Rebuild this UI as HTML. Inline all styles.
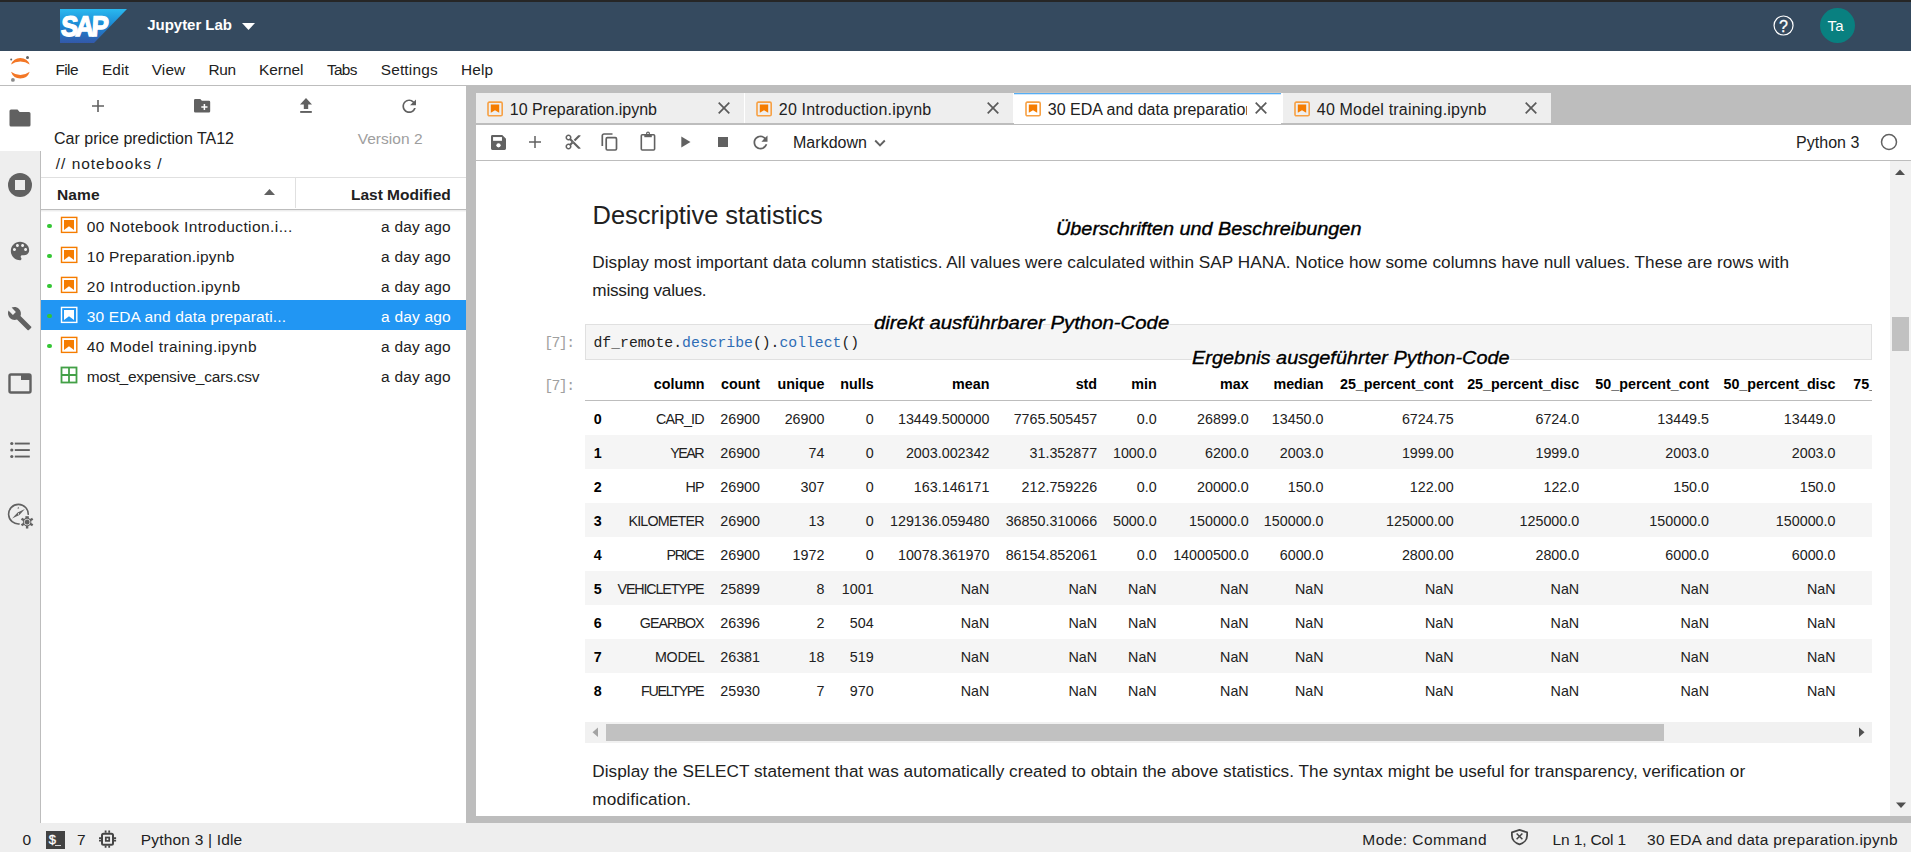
<!DOCTYPE html>
<html><head><meta charset="utf-8">
<style>
*{box-sizing:border-box;margin:0;padding:0}
html,body{width:1911px;height:852px;overflow:hidden;background:#fff;font-family:"Liberation Sans",sans-serif;color:#212121}
.abs{position:absolute}
.t{position:absolute;white-space:nowrap}
svg{position:absolute;overflow:visible}
</style></head><body>
<div class="abs" style="left:0px;top:0px;width:1911px;height:2px;background:#262626;"></div>
<div class="abs" style="left:0px;top:2px;width:1911px;height:49px;background:#354a5f;"></div>
<svg style="left:60px;top:9px" width="67" height="34" viewBox="0 0 67 34">
<defs><linearGradient id="sapg" x1="0" y1="0" x2="0" y2="1"><stop offset="0" stop-color="#2ab9ef"/><stop offset="0.5" stop-color="#1b86d2"/><stop offset="1" stop-color="#3358a9"/></linearGradient></defs>
<polygon points="0,0 67,0 34,34 0,34" fill="url(#sapg)"/>
<text x="2.4" y="27" font-family="Liberation Sans" font-weight="bold" font-size="28.5" fill="#fff" stroke="#fff" stroke-width="1.3" letter-spacing="-2.8" transform="scale(0.9,1) skewX(-4)">SAP</text>
</svg>
<div class="t" style="left:147.30px;top:17.32px;font-size:15px;line-height:16.75px;font-family:'Liberation Sans',sans-serif;color:#fff;letter-spacing:-0.042px;font-weight:bold;">Jupyter Lab</div>
<svg style="left:242px;top:23px" width="13" height="7"><polygon points="0,0 13,0 6.5,7" fill="#fff"/></svg>
<svg style="left:1771.5px;top:14.4px" width="23" height="23" viewBox="0 0 23 23"><circle cx="11.55" cy="11.5" r="9.5" fill="none" stroke="#fff" stroke-width="1.2"/><text x="11.55" y="17.8" text-anchor="middle" font-family="Liberation Sans" font-size="16" fill="#fff" stroke="#fff" stroke-width="0.3">?</text></svg>
<div class="abs" style="left:1819.9px;top:7.8px;width:35.2px;height:35.2px;border-radius:50%;background:#098080"></div>
<div class="t" style="left:1827.60px;top:17.52px;font-size:15px;line-height:16.75px;font-family:'Liberation Sans',sans-serif;color:#fff;letter-spacing:0.045px;">Ta</div>
<div class="abs" style="left:0px;top:85px;width:1911px;height:1px;background:#bdbdbd;"></div>
<svg style="left:4px;top:52px" width="32" height="34" viewBox="0 0 32 34">
<path d="M7 12.6A9.92 9.92 0 0 1 25.7 12.6A16.07 16.07 0 0 0 7 12.6Z" fill="#f37726"/>
<path d="M7 19.75A9.85 9.85 0 0 0 25.7 19.75A15.45 15.45 0 0 1 7 19.75Z" fill="#f37726"/>
<circle cx="23.5" cy="5.6" r="1.5" fill="#616161"/>
<circle cx="7.2" cy="7.6" r="1" fill="#616161"/>
<circle cx="8.9" cy="27.9" r="1.9" fill="#8a8a8a"/>
</svg>
<div class="t" style="left:55.50px;top:60.86px;font-size:15.4px;line-height:17.20px;font-family:'Liberation Sans',sans-serif;color:#212121;letter-spacing:-0.603px;">File</div>
<div class="t" style="left:102.00px;top:60.86px;font-size:15.4px;line-height:17.20px;font-family:'Liberation Sans',sans-serif;color:#212121;letter-spacing:0.055px;">Edit</div>
<div class="t" style="left:151.80px;top:60.86px;font-size:15.4px;line-height:17.20px;font-family:'Liberation Sans',sans-serif;color:#212121;letter-spacing:0.086px;">View</div>
<div class="t" style="left:208.50px;top:60.86px;font-size:15.4px;line-height:17.20px;font-family:'Liberation Sans',sans-serif;color:#212121;letter-spacing:-0.372px;">Run</div>
<div class="t" style="left:259.00px;top:60.86px;font-size:15.4px;line-height:17.20px;font-family:'Liberation Sans',sans-serif;color:#212121;letter-spacing:-0.004px;">Kernel</div>
<div class="t" style="left:327.00px;top:60.86px;font-size:15.4px;line-height:17.20px;font-family:'Liberation Sans',sans-serif;color:#212121;letter-spacing:-0.708px;">Tabs</div>
<div class="t" style="left:380.70px;top:60.86px;font-size:15.4px;line-height:17.20px;font-family:'Liberation Sans',sans-serif;color:#212121;letter-spacing:0.194px;">Settings</div>
<div class="t" style="left:461.00px;top:60.86px;font-size:15.4px;line-height:17.20px;font-family:'Liberation Sans',sans-serif;color:#212121;letter-spacing:0.174px;">Help</div>
<div class="abs" style="left:0px;top:86px;width:40px;height:737px;background:#eeeeee;"></div>
<div class="abs" style="left:40px;top:151px;width:1px;height:672px;background:#bdbdbd;"></div>
<div class="abs" style="left:0px;top:86px;width:41px;height:65px;background:#fff;"></div>
<svg style="left:9px;top:108px" width="22" height="20" viewBox="0 0 22 20"><path d="M2 1.5h6.5l2.2 2.5H20a1.5 1.5 0 0 1 1.5 1.5V17a1.5 1.5 0 0 1-1.5 1.5H2A1.5 1.5 0 0 1 .5 17V3A1.5 1.5 0 0 1 2 1.5z" fill="#616161"/></svg>
<svg style="left:8px;top:173px" width="24" height="24" viewBox="0 0 24 24"><circle cx="12" cy="12" r="12" fill="#616161"/><rect x="7" y="7" width="10" height="10" fill="#eeeeee"/></svg>
<svg style="left:10px;top:241px" width="20" height="20" viewBox="0 0 24 24"><path d="M12 1C5.9 1 1 5.9 1 12s4.9 11 11 11c1 0 1.8-.8 1.8-1.8 0-.5-.2-.9-.5-1.2-.3-.3-.5-.7-.5-1.2 0-1 .8-1.8 1.8-1.8H17c3.4 0 6-2.7 6-6C23 5.5 18.1 1 12 1zM5.3 12c-1 0-1.8-.8-1.8-1.8S4.3 8.3 5.3 8.3 7.2 9.2 7.2 10.2 6.3 12 5.3 12zm3.6-4.9c-1 0-1.8-.8-1.8-1.8S7.9 3.5 8.9 3.5s1.8.8 1.8 1.8-.8 1.8-1.8 1.8zm6.2 0c-1 0-1.8-.8-1.8-1.8s.8-1.8 1.8-1.8 1.8.8 1.8 1.8-.8 1.8-1.8 1.8zm3.6 4.9c-1 0-1.8-.8-1.8-1.8s.8-1.8 1.8-1.8 1.8.8 1.8 1.8-.8 1.8-1.8 1.8z" fill="#616161"/></svg>
<svg style="left:8px;top:305px" width="24" height="25" viewBox="0 0 24 25"><path d="M23 21.5 12.5 11c.9-2.4.4-5.2-1.5-7.1C9 1.9 6 1.5 3.6 2.6l4.3 4.3-3 3L.5 5.6C-.6 8 0 11 1.9 13c1.9 1.9 4.7 2.4 7.1 1.5L19.5 25c.4.4 1 .4 1.4 0l2.1-2.1c.5-.4.5-1.1 0-1.4z" fill="#616161"/></svg>
<svg style="left:8px;top:373px" width="24" height="21" viewBox="0 0 24 21"><rect x="1.5" y="1.5" width="21" height="18" rx="1.5" fill="none" stroke="#616161" stroke-width="2.4"/><rect x="13" y="1" width="10" height="6" fill="#616161"/></svg>
<svg style="left:10px;top:441px" width="21" height="18" viewBox="0 0 21 18"><circle cx="1.8" cy="2.5" r="1.6" fill="#616161"/><circle cx="1.8" cy="9" r="1.6" fill="#616161"/><circle cx="1.8" cy="15.5" r="1.6" fill="#616161"/><rect x="4.8" y="1.6" width="15" height="1.9" fill="#616161"/><rect x="4.8" y="8.1" width="15" height="1.9" fill="#616161"/><rect x="4.8" y="14.6" width="15" height="1.9" fill="#616161"/></svg>
<svg style="left:6px;top:501px" width="28" height="28" viewBox="0 0 28 28"><path d="M13.6 22.9A9.8 9.8 0 1 1 22.2 13.9" fill="none" stroke="#616161" stroke-width="1.6"/><polygon points="6.1,17.5 11.61,11.59 18.9,8.1 13.39,14.01" fill="#616161"/><rect x="12.1" y="12.1" width="0.9" height="1.6" fill="#eee"/><polygon points="11.4,7.5 13.2,7.5 12.3,5.7" fill="#616161"/><circle cx="21.1" cy="21.06" r="6.3" fill="#eee"/><rect x="19.4" y="15.2" width="3.4" height="2.6" transform="rotate(0 21.1 21.06)" fill="#616161"/><rect x="19.9" y="14.6" width="2.4" height="3" transform="rotate(60 21.1 21.06)" fill="#616161"/><rect x="19.9" y="14.6" width="2.4" height="3" transform="rotate(120 21.1 21.06)" fill="#616161"/><rect x="19.9" y="14.6" width="2.4" height="3" transform="rotate(180 21.1 21.06)" fill="#616161"/><rect x="19.9" y="14.6" width="2.4" height="3" transform="rotate(240 21.1 21.06)" fill="#616161"/><rect x="19.9" y="14.6" width="2.4" height="3" transform="rotate(300 21.1 21.06)" fill="#616161"/><circle cx="21.1" cy="21.06" r="4.3" fill="#616161"/><circle cx="21.1" cy="21.06" r="2.9" fill="none" stroke="#eee" stroke-width="0.8"/></svg>
<svg style="left:91px;top:99px" width="14" height="14" viewBox="0 0 14 14"><path d="M7 1v12M1 7h12" stroke="#616161" stroke-width="1.6"/></svg>
<svg style="left:194px;top:99px" width="16.2" height="13.6" viewBox="0 0 16.2 13.6"><path d="M1.3 0h5l1.6 1.8H14.9A1.3 1.3 0 0 1 16.2 3.1v9.2a1.3 1.3 0 0 1-1.3 1.3H1.3A1.3 1.3 0 0 1 0 12.3V1.3A1.3 1.3 0 0 1 1.3 0z" fill="#616161"/><path d="M10.4 4.9v6.2M7.3 8h6.2" stroke="#fff" stroke-width="1.5"/></svg>
<svg style="left:298px;top:97px" width="16" height="17" viewBox="0 0 16 17"><path d="M8 1 2 7.5h3.8V12h4.4V7.5H14z" fill="#616161"/><rect x="2.2" y="14" width="11.6" height="1.9" fill="#616161"/></svg>
<svg style="left:398.8px;top:95.7px" width="20.4" height="20.4" viewBox="0 0 24 24"><path d="M17.65 6.35A7.958 7.958 0 0 0 12 4c-4.42 0-7.99 3.58-7.99 8s3.57 8 7.99 8c3.73 0 6.84-2.55 7.73-6h-2.08A5.99 5.99 0 0 1 12 18c-3.31 0-6-2.69-6-6s2.69-6 6-6c1.66 0 3.14.69 4.22 1.78L13 11h7V4l-2.35 2.35z" fill="#616161"/></svg>
<div class="t" style="left:54.00px;top:129.52px;font-size:16px;line-height:17.87px;font-family:'Liberation Sans',sans-serif;color:#212121;letter-spacing:0.003px;">Car price prediction TA12</div>
<div class="t" style="left:357.70px;top:129.97px;font-size:15.5px;line-height:17.31px;font-family:'Liberation Sans',sans-serif;color:#9e9e9e;letter-spacing:0.023px;">Version 2</div>
<div class="t" style="left:55.80px;top:154.97px;font-size:15.5px;line-height:17.31px;font-family:'Liberation Sans',sans-serif;color:#212121;letter-spacing:0.972px;">// notebooks /</div>
<div class="abs" style="left:41px;top:177px;width:425px;height:1px;background:#e0e0e0;"></div>
<div class="abs" style="left:41px;top:209px;width:425px;height:1px;background:#bdbdbd;"></div>
<div class="abs" style="left:41px;top:210px;width:425px;height:1px;background:#ededed;"></div>
<div class="abs" style="left:41px;top:211px;width:425px;height:1px;background:#f7f7f7;"></div>
<div class="abs" style="left:295px;top:178px;width:1px;height:30px;background:#e0e0e0;"></div>
<div class="t" style="left:56.90px;top:185.77px;font-size:15.5px;line-height:17.31px;font-family:'Liberation Sans',sans-serif;color:#212121;letter-spacing:0.159px;font-weight:bold;">Name</div>
<svg style="left:264px;top:189px" width="11" height="6"><polygon points="0,6 11,6 5.5,0" fill="#616161"/></svg>
<div class="t" style="left:351.00px;top:185.77px;font-size:15.5px;line-height:17.31px;font-family:'Liberation Sans',sans-serif;color:#212121;letter-spacing:-0.015px;font-weight:bold;">Last Modified</div>
<div class="abs" style="left:47.1px;top:223.5px;width:4.6px;height:4.6px;border-radius:50%;background:#33c633"></div>
<svg style="left:60px;top:216px" width="18" height="18" viewBox="0 0 18 18"><rect x="1.5" y="1.4" width="15.3" height="15" fill="none" stroke="#f57c00" stroke-width="1.4"/><path d="M4 4h10v10L9 10.2 4 14z" fill="#f57c00"/></svg>
<div class="t" style="left:86.80px;top:217.77px;font-size:15.5px;line-height:17.31px;font-family:'Liberation Sans',sans-serif;color:#212121;letter-spacing:0.419px;">00 Notebook Introduction.i...</div>
<div class="t" style="left:381.10px;top:217.77px;font-size:15.5px;line-height:17.31px;font-family:'Liberation Sans',sans-serif;color:#212121;letter-spacing:0.189px;">a day ago</div>
<div class="abs" style="left:47.1px;top:253.5px;width:4.6px;height:4.6px;border-radius:50%;background:#33c633"></div>
<svg style="left:60px;top:246px" width="18" height="18" viewBox="0 0 18 18"><rect x="1.5" y="1.4" width="15.3" height="15" fill="none" stroke="#f57c00" stroke-width="1.4"/><path d="M4 4h10v10L9 10.2 4 14z" fill="#f57c00"/></svg>
<div class="t" style="left:86.80px;top:247.77px;font-size:15.5px;line-height:17.31px;font-family:'Liberation Sans',sans-serif;color:#212121;letter-spacing:0.234px;">10 Preparation.ipynb</div>
<div class="t" style="left:381.10px;top:247.77px;font-size:15.5px;line-height:17.31px;font-family:'Liberation Sans',sans-serif;color:#212121;letter-spacing:0.189px;">a day ago</div>
<div class="abs" style="left:47.1px;top:283.5px;width:4.6px;height:4.6px;border-radius:50%;background:#33c633"></div>
<svg style="left:60px;top:276px" width="18" height="18" viewBox="0 0 18 18"><rect x="1.5" y="1.4" width="15.3" height="15" fill="none" stroke="#f57c00" stroke-width="1.4"/><path d="M4 4h10v10L9 10.2 4 14z" fill="#f57c00"/></svg>
<div class="t" style="left:86.80px;top:277.77px;font-size:15.5px;line-height:17.31px;font-family:'Liberation Sans',sans-serif;color:#212121;letter-spacing:0.465px;">20 Introduction.ipynb</div>
<div class="t" style="left:381.10px;top:277.77px;font-size:15.5px;line-height:17.31px;font-family:'Liberation Sans',sans-serif;color:#212121;letter-spacing:0.189px;">a day ago</div>
<div class="abs" style="left:41px;top:300px;width:425px;height:30px;background:#2196f3;"></div>
<div class="abs" style="left:47.1px;top:313.5px;width:4.6px;height:4.6px;border-radius:50%;background:#33c633"></div>
<svg style="left:60px;top:306px" width="18" height="18" viewBox="0 0 18 18"><rect x="1.5" y="1.4" width="15.3" height="15" fill="none" stroke="#fff" stroke-width="1.4"/><path d="M4 4h10v10L9 10.2 4 14z" fill="#fff"/></svg>
<div class="t" style="left:86.80px;top:307.77px;font-size:15.5px;line-height:17.31px;font-family:'Liberation Sans',sans-serif;color:#fff;letter-spacing:0.133px;">30 EDA and data preparati...</div>
<div class="t" style="left:381.10px;top:307.77px;font-size:15.5px;line-height:17.31px;font-family:'Liberation Sans',sans-serif;color:#fff;letter-spacing:0.189px;">a day ago</div>
<div class="abs" style="left:47.1px;top:343.5px;width:4.6px;height:4.6px;border-radius:50%;background:#33c633"></div>
<svg style="left:60px;top:336px" width="18" height="18" viewBox="0 0 18 18"><rect x="1.5" y="1.4" width="15.3" height="15" fill="none" stroke="#f57c00" stroke-width="1.4"/><path d="M4 4h10v10L9 10.2 4 14z" fill="#f57c00"/></svg>
<div class="t" style="left:86.80px;top:337.77px;font-size:15.5px;line-height:17.31px;font-family:'Liberation Sans',sans-serif;color:#212121;letter-spacing:0.429px;">40 Model training.ipynb</div>
<div class="t" style="left:381.10px;top:337.77px;font-size:15.5px;line-height:17.31px;font-family:'Liberation Sans',sans-serif;color:#212121;letter-spacing:0.189px;">a day ago</div>
<svg style="left:60px;top:366px" width="18" height="18" viewBox="0 0 18 18"><rect x="1.5" y="1.5" width="15" height="15" fill="none" stroke="#43a047" stroke-width="1.8"/><path d="M9 1v16M1 9h16" stroke="#43a047" stroke-width="1.8"/></svg>
<div class="t" style="left:86.80px;top:367.77px;font-size:15.5px;line-height:17.31px;font-family:'Liberation Sans',sans-serif;color:#212121;letter-spacing:-0.212px;">most_expensive_cars.csv</div>
<div class="t" style="left:381.10px;top:367.77px;font-size:15.5px;line-height:17.31px;font-family:'Liberation Sans',sans-serif;color:#212121;letter-spacing:0.189px;">a day ago</div>
<div class="abs" style="left:466px;top:86px;width:10px;height:737px;background:#bdbdbd;"></div>
<div class="abs" style="left:476px;top:816px;width:1435px;height:7px;background:#bdbdbd;"></div>
<div class="abs" style="left:476px;top:86px;width:1435px;height:7px;background:#bdbdbd;"></div>
<div class="abs" style="left:1551px;top:86px;width:360px;height:37px;background:#bdbdbd;"></div>
<div class="abs" style="left:476px;top:123px;width:1435px;height:2px;background:#bdbdbd;"></div>
<div class="abs" style="left:1014px;top:92px;width:267px;height:1px;background:#c9c5c1;"></div>
<div class="abs" style="left:476px;top:93px;width:268px;height:30px;background:#eeeeee;overflow:hidden">
<svg style="left:11px;top:8px" width="16" height="16" viewBox="0 0 16 16"><rect x="1" y="1.1" width="14.2" height="13.6" rx="1.3" fill="none" stroke="#f7a043" stroke-width="1.6"/><path d="M3.8 3.6h8.4v8.2L8 9.2 3.8 11.8z" fill="#f57c00"/></svg>
<div class="abs" style="left:33px;top:0;width:208px;height:30px;overflow:hidden"><div class="t" style="left:0.80px;top:7.62px;font-size:16px;line-height:17.87px;font-family:'Liberation Sans',sans-serif;color:#212121;letter-spacing:-0.024px;">10 Preparation.ipynb</div>
</div>
<svg style="left:242px;top:9px" width="12" height="12" viewBox="0 0 12 12"><path d="M.7 .7l10.6 10.6M11.3 .7L.7 11.3" stroke="#5a5a5a" stroke-width="1.7"/></svg>
</div>
<div class="abs" style="left:745px;top:93px;width:268px;height:30px;background:#eeeeee;overflow:hidden">
<svg style="left:11px;top:8px" width="16" height="16" viewBox="0 0 16 16"><rect x="1" y="1.1" width="14.2" height="13.6" rx="1.3" fill="none" stroke="#f7a043" stroke-width="1.6"/><path d="M3.8 3.6h8.4v8.2L8 9.2 3.8 11.8z" fill="#f57c00"/></svg>
<div class="abs" style="left:33px;top:0;width:208px;height:30px;overflow:hidden"><div class="t" style="left:0.80px;top:7.62px;font-size:16px;line-height:17.87px;font-family:'Liberation Sans',sans-serif;color:#212121;letter-spacing:0.193px;">20 Introduction.ipynb</div>
</div>
<svg style="left:242px;top:9px" width="12" height="12" viewBox="0 0 12 12"><path d="M.7 .7l10.6 10.6M11.3 .7L.7 11.3" stroke="#5a5a5a" stroke-width="1.7"/></svg>
</div>
<div class="abs" style="left:1014px;top:93px;width:267px;height:31px;background:#fff;overflow:hidden">
<div class="abs" style="left:0px;top:0px;width:267px;height:1px;background:#55aef5;"></div>
<div class="abs" style="left:0px;top:1px;width:267px;height:1px;background:#cfe7fb;"></div>
<svg style="left:11px;top:8px" width="16" height="16" viewBox="0 0 16 16"><rect x="1" y="1.1" width="14.2" height="13.6" rx="1.3" fill="none" stroke="#f7a043" stroke-width="1.6"/><path d="M3.8 3.6h8.4v8.2L8 9.2 3.8 11.8z" fill="#f57c00"/></svg>
<div class="abs" style="left:33px;top:0;width:200px;height:30px;overflow:hidden"><div class="t" style="left:0.80px;top:7.62px;font-size:16px;line-height:17.87px;font-family:'Liberation Sans',sans-serif;color:#212121;letter-spacing:0.000px;">30 EDA and data preparation.ipynb</div>
</div>
<svg style="left:241px;top:9px" width="12" height="12" viewBox="0 0 12 12"><path d="M.7 .7l10.6 10.6M11.3 .7L.7 11.3" stroke="#5a5a5a" stroke-width="1.7"/></svg>
</div>
<div class="abs" style="left:1283px;top:93px;width:268px;height:30px;background:#eeeeee;overflow:hidden">
<svg style="left:11px;top:8px" width="16" height="16" viewBox="0 0 16 16"><rect x="1" y="1.1" width="14.2" height="13.6" rx="1.3" fill="none" stroke="#f7a043" stroke-width="1.6"/><path d="M3.8 3.6h8.4v8.2L8 9.2 3.8 11.8z" fill="#f57c00"/></svg>
<div class="abs" style="left:33px;top:0;width:208px;height:30px;overflow:hidden"><div class="t" style="left:0.80px;top:7.62px;font-size:16px;line-height:17.87px;font-family:'Liberation Sans',sans-serif;color:#212121;letter-spacing:0.185px;">40 Model training.ipynb</div>
</div>
<svg style="left:242px;top:9px" width="12" height="12" viewBox="0 0 12 12"><path d="M.7 .7l10.6 10.6M11.3 .7L.7 11.3" stroke="#5a5a5a" stroke-width="1.7"/></svg>
</div>
<div class="abs" style="left:476px;top:160px;width:1435px;height:1px;background:#bdbdbd;"></div>
<svg style="left:490.5px;top:134.5px" width="15" height="15" viewBox="0 0 16 16"><path d="M1.5 0h10.5L16 4v10.5A1.5 1.5 0 0 1 14.5 16h-13A1.5 1.5 0 0 1 0 14.5v-13A1.5 1.5 0 0 1 1.5 0z" fill="#616161"/><rect x="2.2" y="2.2" width="9.5" height="4" fill="#fff"/><circle cx="8" cy="11" r="2.3" fill="#fff"/></svg>
<svg style="left:529px;top:136px" width="12" height="12" viewBox="0 0 12 12"><path d="M6 0v12M0 6h12" stroke="#616161" stroke-width="1.5"/></svg>
<svg style="left:564px;top:133px" width="18" height="18" viewBox="0 0 24 24"><path d="M9.64 7.64c.23-.5.36-1.05.36-1.64 0-2.21-1.79-4-4-4S2 3.79 2 6s1.79 4 4 4c.59 0 1.14-.13 1.64-.36L10 12l-2.36 2.36C7.14 14.13 6.59 14 6 14c-2.21 0-4 1.79-4 4s1.79 4 4 4 4-1.79 4-4c0-.59-.13-1.14-.36-1.64L12 14l7 7h3v-1L9.64 7.64zM6 8c-1.1 0-2-.89-2-2s.9-2 2-2 2 .89 2 2-.9 2-2 2zm0 12c-1.1 0-2-.89-2-2s.9-2 2-2 2 .89 2 2-.9 2-2 2zm6-7.5c-.28 0-.5-.22-.5-.5s.22-.5.5-.5.5.22.5.5-.22.5-.5.5zM19 3l-6 6 2 2 7-7V3z" fill="#616161"/></svg>
<svg style="left:601px;top:133px" width="17" height="18" viewBox="0 0 17 18"><path d="M11.5 1H3a1.7 1.7 0 0 0-1.7 1.7V13" fill="none" stroke="#616161" stroke-width="1.7"/><rect x="5.2" y="4.7" width="10.3" height="12.3" rx="1.2" fill="none" stroke="#616161" stroke-width="1.7"/></svg>
<svg style="left:639px;top:131px" width="18" height="20" viewBox="0 0 18 20"><rect x="2.3" y="3.7" width="13.3" height="15.3" rx="1" fill="none" stroke="#616161" stroke-width="1.6"/><rect x="5.3" y="3.6" width="7.5" height="2.6" fill="#616161"/><circle cx="9" cy="2.6" r="1.4" fill="none" stroke="#616161" stroke-width="1.2"/></svg>
<svg style="left:681px;top:136px" width="10" height="12" viewBox="0 0 10 12"><path d="M.3 .4L9.5 6 .3 11.6z" fill="#616161"/></svg>
<div class="abs" style="left:718px;top:137px;width:10px;height:10px;background:#616161"></div>
<svg style="left:749.5px;top:131.5px" width="21" height="21" viewBox="0 0 24 24"><path d="M17.65 6.35A7.958 7.958 0 0 0 12 4c-4.42 0-7.99 3.58-7.99 8s3.57 8 7.99 8c3.73 0 6.84-2.55 7.73-6h-2.08A5.99 5.99 0 0 1 12 18c-3.31 0-6-2.69-6-6s2.69-6 6-6c1.66 0 3.14.69 4.22 1.78L13 11h7V4l-2.35 2.35z" fill="#616161"/></svg>
<svg style="left:874px;top:138.8px" width="12" height="8" viewBox="0 0 12 8"><path d="M1.2 1.5l4.8 4.8 4.8-4.8" fill="none" stroke="#616161" stroke-width="1.9"/></svg>
<svg style="left:1880px;top:133px" width="18" height="18" viewBox="0 0 18 18"><circle cx="9" cy="9" r="7.5" fill="none" stroke="#616161" stroke-width="1.5"/></svg>
<div class="t" style="left:793.00px;top:133.52px;font-size:16px;line-height:17.87px;font-family:'Liberation Sans',sans-serif;color:#212121;letter-spacing:0.027px;">Markdown</div>
<div class="t" style="left:1796.00px;top:133.52px;font-size:16px;line-height:17.87px;font-family:'Liberation Sans',sans-serif;color:#212121;letter-spacing:0.035px;">Python 3</div>
<div class="t" style="left:592.60px;top:200.92px;font-size:25.5px;line-height:28.48px;font-family:'Liberation Sans',sans-serif;color:#212121;letter-spacing:-0.037px;">Descriptive statistics</div>
<div class="t" style="left:592.30px;top:252.63px;font-size:17.2px;line-height:19.21px;font-family:'Liberation Sans',sans-serif;color:#212121;letter-spacing:0.034px;">Display most important data column statistics. All values were calculated within SAP HANA. Notice how some columns have null values. These are rows with</div>
<div class="t" style="left:592.30px;top:280.63px;font-size:17.2px;line-height:19.21px;font-family:'Liberation Sans',sans-serif;color:#212121;letter-spacing:-0.234px;">missing values.</div>
<div class="abs" style="left:585px;top:324px;width:1287px;height:36px;background:#f5f5f5;border:1px solid #e0e0e0"></div>
<div class="t" style="left:544.30px;top:334.71px;font-size:14.75px;line-height:16.71px;font-family:'Liberation Mono',monospace;color:#a0a0a0;letter-spacing:-1.567px;">[7]:</div>
<div class="t" style="left:593.50px;top:334.91px;font-size:14.75px;line-height:16.71px;font-family:'Liberation Mono',monospace;color:#212121;letter-spacing:0.002px;">df_remote.<span style="color:#2f6db5">describe</span>().<span style="color:#2f6db5">collect</span>()</div>
<div class="t" style="left:544.30px;top:378.01px;font-size:14.75px;line-height:16.71px;font-family:'Liberation Mono',monospace;color:#a0a0a0;letter-spacing:-1.567px;">[7]:</div>
<div class="abs" style="left:585px;top:365px;width:1287px;height:350px;overflow:hidden">
<div class="t" style="left:-880.40px;width:1000px;text-align:right;top:11.76px;font-size:14.3px;line-height:15.97px;font-family:'Liberation Sans',sans-serif;color:#000;letter-spacing:0.000px;font-weight:bold;">column</div>
<div class="t" style="left:-825.00px;width:1000px;text-align:right;top:11.76px;font-size:14.3px;line-height:15.97px;font-family:'Liberation Sans',sans-serif;color:#000;letter-spacing:0.000px;font-weight:bold;">count</div>
<div class="t" style="left:-760.59px;width:1000px;text-align:right;top:11.76px;font-size:14.3px;line-height:15.97px;font-family:'Liberation Sans',sans-serif;color:#000;letter-spacing:0.000px;font-weight:bold;">unique</div>
<div class="t" style="left:-711.41px;width:1000px;text-align:right;top:11.76px;font-size:14.3px;line-height:15.97px;font-family:'Liberation Sans',sans-serif;color:#000;letter-spacing:0.000px;font-weight:bold;">nulls</div>
<div class="t" style="left:-595.60px;width:1000px;text-align:right;top:11.76px;font-size:14.3px;line-height:15.97px;font-family:'Liberation Sans',sans-serif;color:#000;letter-spacing:0.000px;font-weight:bold;">mean</div>
<div class="t" style="left:-487.90px;width:1000px;text-align:right;top:11.76px;font-size:14.3px;line-height:15.97px;font-family:'Liberation Sans',sans-serif;color:#000;letter-spacing:0.000px;font-weight:bold;">std</div>
<div class="t" style="left:-428.30px;width:1000px;text-align:right;top:11.76px;font-size:14.3px;line-height:15.97px;font-family:'Liberation Sans',sans-serif;color:#000;letter-spacing:0.000px;font-weight:bold;">min</div>
<div class="t" style="left:-336.29px;width:1000px;text-align:right;top:11.76px;font-size:14.3px;line-height:15.97px;font-family:'Liberation Sans',sans-serif;color:#000;letter-spacing:0.000px;font-weight:bold;">max</div>
<div class="t" style="left:-261.50px;width:1000px;text-align:right;top:11.76px;font-size:14.3px;line-height:15.97px;font-family:'Liberation Sans',sans-serif;color:#000;letter-spacing:0.000px;font-weight:bold;">median</div>
<div class="t" style="left:-131.40px;width:1000px;text-align:right;top:11.76px;font-size:14.3px;line-height:15.97px;font-family:'Liberation Sans',sans-serif;color:#000;letter-spacing:0.000px;font-weight:bold;">25_percent_cont</div>
<div class="t" style="left:-5.80px;width:1000px;text-align:right;top:11.76px;font-size:14.3px;line-height:15.97px;font-family:'Liberation Sans',sans-serif;color:#000;letter-spacing:0.000px;font-weight:bold;">25_percent_disc</div>
<div class="t" style="left:124.00px;width:1000px;text-align:right;top:11.76px;font-size:14.3px;line-height:15.97px;font-family:'Liberation Sans',sans-serif;color:#000;letter-spacing:0.000px;font-weight:bold;">50_percent_cont</div>
<div class="t" style="left:250.50px;width:1000px;text-align:right;top:11.76px;font-size:14.3px;line-height:15.97px;font-family:'Liberation Sans',sans-serif;color:#000;letter-spacing:0.000px;font-weight:bold;">50_percent_disc</div>
<div class="t" style="left:382.00px;width:1000px;text-align:right;top:11.76px;font-size:14.3px;line-height:15.97px;font-family:'Liberation Sans',sans-serif;color:#000;letter-spacing:0.000px;font-weight:bold;">75_percent_cont</div>
<div class="abs" style="left:0px;top:35px;width:1287px;height:1px;background:#bdbdbd;"></div>
<div class="t" style="left:8.70px;top:46.56px;font-size:14.3px;line-height:15.97px;font-family:'Liberation Sans',sans-serif;color:#000;letter-spacing:0.000px;font-weight:bold;">0</div>
<div class="t" style="left:-881.18px;width:1000px;text-align:right;top:46.56px;font-size:14.3px;line-height:15.97px;font-family:'Liberation Sans',sans-serif;color:#212121;letter-spacing:-0.770px;">CAR_ID</div>
<div class="t" style="left:-825.00px;width:1000px;text-align:right;top:46.56px;font-size:14.3px;line-height:15.97px;font-family:'Liberation Sans',sans-serif;color:#212121;letter-spacing:0.000px;">26900</div>
<div class="t" style="left:-760.60px;width:1000px;text-align:right;top:46.56px;font-size:14.3px;line-height:15.97px;font-family:'Liberation Sans',sans-serif;color:#212121;letter-spacing:0.000px;">26900</div>
<div class="t" style="left:-711.40px;width:1000px;text-align:right;top:46.56px;font-size:14.3px;line-height:15.97px;font-family:'Liberation Sans',sans-serif;color:#212121;letter-spacing:0.000px;">0</div>
<div class="t" style="left:-595.61px;width:1000px;text-align:right;top:46.56px;font-size:14.3px;line-height:15.97px;font-family:'Liberation Sans',sans-serif;color:#212121;letter-spacing:0.000px;">13449.500000</div>
<div class="t" style="left:-487.89px;width:1000px;text-align:right;top:46.56px;font-size:14.3px;line-height:15.97px;font-family:'Liberation Sans',sans-serif;color:#212121;letter-spacing:0.000px;">7765.505457</div>
<div class="t" style="left:-428.30px;width:1000px;text-align:right;top:46.56px;font-size:14.3px;line-height:15.97px;font-family:'Liberation Sans',sans-serif;color:#212121;letter-spacing:0.000px;">0.0</div>
<div class="t" style="left:-336.30px;width:1000px;text-align:right;top:46.56px;font-size:14.3px;line-height:15.97px;font-family:'Liberation Sans',sans-serif;color:#212121;letter-spacing:0.000px;">26899.0</div>
<div class="t" style="left:-261.50px;width:1000px;text-align:right;top:46.56px;font-size:14.3px;line-height:15.97px;font-family:'Liberation Sans',sans-serif;color:#212121;letter-spacing:0.000px;">13450.0</div>
<div class="t" style="left:-131.40px;width:1000px;text-align:right;top:46.56px;font-size:14.3px;line-height:15.97px;font-family:'Liberation Sans',sans-serif;color:#212121;letter-spacing:0.000px;">6724.75</div>
<div class="t" style="left:-5.81px;width:1000px;text-align:right;top:46.56px;font-size:14.3px;line-height:15.97px;font-family:'Liberation Sans',sans-serif;color:#212121;letter-spacing:0.000px;">6724.0</div>
<div class="t" style="left:124.00px;width:1000px;text-align:right;top:46.56px;font-size:14.3px;line-height:15.97px;font-family:'Liberation Sans',sans-serif;color:#212121;letter-spacing:0.000px;">13449.5</div>
<div class="t" style="left:250.50px;width:1000px;text-align:right;top:46.56px;font-size:14.3px;line-height:15.97px;font-family:'Liberation Sans',sans-serif;color:#212121;letter-spacing:0.000px;">13449.0</div>
<div class="t" style="left:382.00px;width:1000px;text-align:right;top:46.56px;font-size:14.3px;line-height:15.97px;font-family:'Liberation Sans',sans-serif;color:#212121;letter-spacing:0.000px;">20174.25</div>
<div class="abs" style="left:0px;top:70px;width:1287px;height:34px;background:#f5f5f5;"></div>
<div class="t" style="left:8.70px;top:80.56px;font-size:14.3px;line-height:15.97px;font-family:'Liberation Sans',sans-serif;color:#000;letter-spacing:0.000px;font-weight:bold;">1</div>
<div class="t" style="left:-881.94px;width:1000px;text-align:right;top:80.56px;font-size:14.3px;line-height:15.97px;font-family:'Liberation Sans',sans-serif;color:#212121;letter-spacing:-1.546px;">YEAR</div>
<div class="t" style="left:-825.00px;width:1000px;text-align:right;top:80.56px;font-size:14.3px;line-height:15.97px;font-family:'Liberation Sans',sans-serif;color:#212121;letter-spacing:0.000px;">26900</div>
<div class="t" style="left:-760.60px;width:1000px;text-align:right;top:80.56px;font-size:14.3px;line-height:15.97px;font-family:'Liberation Sans',sans-serif;color:#212121;letter-spacing:0.000px;">74</div>
<div class="t" style="left:-711.40px;width:1000px;text-align:right;top:80.56px;font-size:14.3px;line-height:15.97px;font-family:'Liberation Sans',sans-serif;color:#212121;letter-spacing:0.000px;">0</div>
<div class="t" style="left:-595.59px;width:1000px;text-align:right;top:80.56px;font-size:14.3px;line-height:15.97px;font-family:'Liberation Sans',sans-serif;color:#212121;letter-spacing:0.000px;">2003.002342</div>
<div class="t" style="left:-487.90px;width:1000px;text-align:right;top:80.56px;font-size:14.3px;line-height:15.97px;font-family:'Liberation Sans',sans-serif;color:#212121;letter-spacing:0.000px;">31.352877</div>
<div class="t" style="left:-428.31px;width:1000px;text-align:right;top:80.56px;font-size:14.3px;line-height:15.97px;font-family:'Liberation Sans',sans-serif;color:#212121;letter-spacing:0.000px;">1000.0</div>
<div class="t" style="left:-336.31px;width:1000px;text-align:right;top:80.56px;font-size:14.3px;line-height:15.97px;font-family:'Liberation Sans',sans-serif;color:#212121;letter-spacing:0.000px;">6200.0</div>
<div class="t" style="left:-261.51px;width:1000px;text-align:right;top:80.56px;font-size:14.3px;line-height:15.97px;font-family:'Liberation Sans',sans-serif;color:#212121;letter-spacing:0.000px;">2003.0</div>
<div class="t" style="left:-131.40px;width:1000px;text-align:right;top:80.56px;font-size:14.3px;line-height:15.97px;font-family:'Liberation Sans',sans-serif;color:#212121;letter-spacing:0.000px;">1999.00</div>
<div class="t" style="left:-5.81px;width:1000px;text-align:right;top:80.56px;font-size:14.3px;line-height:15.97px;font-family:'Liberation Sans',sans-serif;color:#212121;letter-spacing:0.000px;">1999.0</div>
<div class="t" style="left:123.99px;width:1000px;text-align:right;top:80.56px;font-size:14.3px;line-height:15.97px;font-family:'Liberation Sans',sans-serif;color:#212121;letter-spacing:0.000px;">2003.0</div>
<div class="t" style="left:250.49px;width:1000px;text-align:right;top:80.56px;font-size:14.3px;line-height:15.97px;font-family:'Liberation Sans',sans-serif;color:#212121;letter-spacing:0.000px;">2003.0</div>
<div class="t" style="left:382.00px;width:1000px;text-align:right;top:80.56px;font-size:14.3px;line-height:15.97px;font-family:'Liberation Sans',sans-serif;color:#212121;letter-spacing:0.000px;">2008.00</div>
<div class="t" style="left:8.70px;top:114.56px;font-size:14.3px;line-height:15.97px;font-family:'Liberation Sans',sans-serif;color:#000;letter-spacing:0.000px;font-weight:bold;">2</div>
<div class="t" style="left:-881.16px;width:1000px;text-align:right;top:114.56px;font-size:14.3px;line-height:15.97px;font-family:'Liberation Sans',sans-serif;color:#212121;letter-spacing:-0.763px;">HP</div>
<div class="t" style="left:-825.00px;width:1000px;text-align:right;top:114.56px;font-size:14.3px;line-height:15.97px;font-family:'Liberation Sans',sans-serif;color:#212121;letter-spacing:0.000px;">26900</div>
<div class="t" style="left:-760.59px;width:1000px;text-align:right;top:114.56px;font-size:14.3px;line-height:15.97px;font-family:'Liberation Sans',sans-serif;color:#212121;letter-spacing:0.000px;">307</div>
<div class="t" style="left:-711.40px;width:1000px;text-align:right;top:114.56px;font-size:14.3px;line-height:15.97px;font-family:'Liberation Sans',sans-serif;color:#212121;letter-spacing:0.000px;">0</div>
<div class="t" style="left:-595.60px;width:1000px;text-align:right;top:114.56px;font-size:14.3px;line-height:15.97px;font-family:'Liberation Sans',sans-serif;color:#212121;letter-spacing:0.000px;">163.146171</div>
<div class="t" style="left:-487.90px;width:1000px;text-align:right;top:114.56px;font-size:14.3px;line-height:15.97px;font-family:'Liberation Sans',sans-serif;color:#212121;letter-spacing:0.000px;">212.759226</div>
<div class="t" style="left:-428.30px;width:1000px;text-align:right;top:114.56px;font-size:14.3px;line-height:15.97px;font-family:'Liberation Sans',sans-serif;color:#212121;letter-spacing:0.000px;">0.0</div>
<div class="t" style="left:-336.30px;width:1000px;text-align:right;top:114.56px;font-size:14.3px;line-height:15.97px;font-family:'Liberation Sans',sans-serif;color:#212121;letter-spacing:0.000px;">20000.0</div>
<div class="t" style="left:-261.49px;width:1000px;text-align:right;top:114.56px;font-size:14.3px;line-height:15.97px;font-family:'Liberation Sans',sans-serif;color:#212121;letter-spacing:0.000px;">150.0</div>
<div class="t" style="left:-131.41px;width:1000px;text-align:right;top:114.56px;font-size:14.3px;line-height:15.97px;font-family:'Liberation Sans',sans-serif;color:#212121;letter-spacing:0.000px;">122.00</div>
<div class="t" style="left:-5.79px;width:1000px;text-align:right;top:114.56px;font-size:14.3px;line-height:15.97px;font-family:'Liberation Sans',sans-serif;color:#212121;letter-spacing:0.000px;">122.0</div>
<div class="t" style="left:124.01px;width:1000px;text-align:right;top:114.56px;font-size:14.3px;line-height:15.97px;font-family:'Liberation Sans',sans-serif;color:#212121;letter-spacing:0.000px;">150.0</div>
<div class="t" style="left:250.51px;width:1000px;text-align:right;top:114.56px;font-size:14.3px;line-height:15.97px;font-family:'Liberation Sans',sans-serif;color:#212121;letter-spacing:0.000px;">150.0</div>
<div class="t" style="left:381.99px;width:1000px;text-align:right;top:114.56px;font-size:14.3px;line-height:15.97px;font-family:'Liberation Sans',sans-serif;color:#212121;letter-spacing:0.000px;">184.00</div>
<div class="abs" style="left:0px;top:138px;width:1287px;height:34px;background:#f5f5f5;"></div>
<div class="t" style="left:8.70px;top:148.56px;font-size:14.3px;line-height:15.97px;font-family:'Liberation Sans',sans-serif;color:#000;letter-spacing:0.000px;font-weight:bold;">3</div>
<div class="t" style="left:-881.21px;width:1000px;text-align:right;top:148.56px;font-size:14.3px;line-height:15.97px;font-family:'Liberation Sans',sans-serif;color:#212121;letter-spacing:-0.805px;">KILOMETER</div>
<div class="t" style="left:-825.00px;width:1000px;text-align:right;top:148.56px;font-size:14.3px;line-height:15.97px;font-family:'Liberation Sans',sans-serif;color:#212121;letter-spacing:0.000px;">26900</div>
<div class="t" style="left:-760.60px;width:1000px;text-align:right;top:148.56px;font-size:14.3px;line-height:15.97px;font-family:'Liberation Sans',sans-serif;color:#212121;letter-spacing:0.000px;">13</div>
<div class="t" style="left:-711.40px;width:1000px;text-align:right;top:148.56px;font-size:14.3px;line-height:15.97px;font-family:'Liberation Sans',sans-serif;color:#212121;letter-spacing:0.000px;">0</div>
<div class="t" style="left:-595.60px;width:1000px;text-align:right;top:148.56px;font-size:14.3px;line-height:15.97px;font-family:'Liberation Sans',sans-serif;color:#212121;letter-spacing:0.000px;">129136.059480</div>
<div class="t" style="left:-487.91px;width:1000px;text-align:right;top:148.56px;font-size:14.3px;line-height:15.97px;font-family:'Liberation Sans',sans-serif;color:#212121;letter-spacing:0.000px;">36850.310066</div>
<div class="t" style="left:-428.31px;width:1000px;text-align:right;top:148.56px;font-size:14.3px;line-height:15.97px;font-family:'Liberation Sans',sans-serif;color:#212121;letter-spacing:0.000px;">5000.0</div>
<div class="t" style="left:-336.30px;width:1000px;text-align:right;top:148.56px;font-size:14.3px;line-height:15.97px;font-family:'Liberation Sans',sans-serif;color:#212121;letter-spacing:0.000px;">150000.0</div>
<div class="t" style="left:-261.50px;width:1000px;text-align:right;top:148.56px;font-size:14.3px;line-height:15.97px;font-family:'Liberation Sans',sans-serif;color:#212121;letter-spacing:0.000px;">150000.0</div>
<div class="t" style="left:-131.40px;width:1000px;text-align:right;top:148.56px;font-size:14.3px;line-height:15.97px;font-family:'Liberation Sans',sans-serif;color:#212121;letter-spacing:0.000px;">125000.00</div>
<div class="t" style="left:-5.80px;width:1000px;text-align:right;top:148.56px;font-size:14.3px;line-height:15.97px;font-family:'Liberation Sans',sans-serif;color:#212121;letter-spacing:0.000px;">125000.0</div>
<div class="t" style="left:124.00px;width:1000px;text-align:right;top:148.56px;font-size:14.3px;line-height:15.97px;font-family:'Liberation Sans',sans-serif;color:#212121;letter-spacing:0.000px;">150000.0</div>
<div class="t" style="left:250.50px;width:1000px;text-align:right;top:148.56px;font-size:14.3px;line-height:15.97px;font-family:'Liberation Sans',sans-serif;color:#212121;letter-spacing:0.000px;">150000.0</div>
<div class="t" style="left:382.00px;width:1000px;text-align:right;top:148.56px;font-size:14.3px;line-height:15.97px;font-family:'Liberation Sans',sans-serif;color:#212121;letter-spacing:0.000px;">150000.00</div>
<div class="t" style="left:8.70px;top:182.56px;font-size:14.3px;line-height:15.97px;font-family:'Liberation Sans',sans-serif;color:#000;letter-spacing:0.000px;font-weight:bold;">4</div>
<div class="t" style="left:-881.80px;width:1000px;text-align:right;top:182.56px;font-size:14.3px;line-height:15.97px;font-family:'Liberation Sans',sans-serif;color:#212121;letter-spacing:-1.400px;">PRICE</div>
<div class="t" style="left:-825.00px;width:1000px;text-align:right;top:182.56px;font-size:14.3px;line-height:15.97px;font-family:'Liberation Sans',sans-serif;color:#212121;letter-spacing:0.000px;">26900</div>
<div class="t" style="left:-760.61px;width:1000px;text-align:right;top:182.56px;font-size:14.3px;line-height:15.97px;font-family:'Liberation Sans',sans-serif;color:#212121;letter-spacing:0.000px;">1972</div>
<div class="t" style="left:-711.40px;width:1000px;text-align:right;top:182.56px;font-size:14.3px;line-height:15.97px;font-family:'Liberation Sans',sans-serif;color:#212121;letter-spacing:0.000px;">0</div>
<div class="t" style="left:-595.61px;width:1000px;text-align:right;top:182.56px;font-size:14.3px;line-height:15.97px;font-family:'Liberation Sans',sans-serif;color:#212121;letter-spacing:0.000px;">10078.361970</div>
<div class="t" style="left:-487.91px;width:1000px;text-align:right;top:182.56px;font-size:14.3px;line-height:15.97px;font-family:'Liberation Sans',sans-serif;color:#212121;letter-spacing:0.000px;">86154.852061</div>
<div class="t" style="left:-428.30px;width:1000px;text-align:right;top:182.56px;font-size:14.3px;line-height:15.97px;font-family:'Liberation Sans',sans-serif;color:#212121;letter-spacing:0.000px;">0.0</div>
<div class="t" style="left:-336.30px;width:1000px;text-align:right;top:182.56px;font-size:14.3px;line-height:15.97px;font-family:'Liberation Sans',sans-serif;color:#212121;letter-spacing:0.000px;">14000500.0</div>
<div class="t" style="left:-261.51px;width:1000px;text-align:right;top:182.56px;font-size:14.3px;line-height:15.97px;font-family:'Liberation Sans',sans-serif;color:#212121;letter-spacing:0.000px;">6000.0</div>
<div class="t" style="left:-131.40px;width:1000px;text-align:right;top:182.56px;font-size:14.3px;line-height:15.97px;font-family:'Liberation Sans',sans-serif;color:#212121;letter-spacing:0.000px;">2800.00</div>
<div class="t" style="left:-5.81px;width:1000px;text-align:right;top:182.56px;font-size:14.3px;line-height:15.97px;font-family:'Liberation Sans',sans-serif;color:#212121;letter-spacing:0.000px;">2800.0</div>
<div class="t" style="left:123.99px;width:1000px;text-align:right;top:182.56px;font-size:14.3px;line-height:15.97px;font-family:'Liberation Sans',sans-serif;color:#212121;letter-spacing:0.000px;">6000.0</div>
<div class="t" style="left:250.49px;width:1000px;text-align:right;top:182.56px;font-size:14.3px;line-height:15.97px;font-family:'Liberation Sans',sans-serif;color:#212121;letter-spacing:0.000px;">6000.0</div>
<div class="t" style="left:382.00px;width:1000px;text-align:right;top:182.56px;font-size:14.3px;line-height:15.97px;font-family:'Liberation Sans',sans-serif;color:#212121;letter-spacing:0.000px;">12500.00</div>
<div class="abs" style="left:0px;top:206px;width:1287px;height:34px;background:#f5f5f5;"></div>
<div class="t" style="left:8.70px;top:216.56px;font-size:14.3px;line-height:15.97px;font-family:'Liberation Sans',sans-serif;color:#000;letter-spacing:0.000px;font-weight:bold;">5</div>
<div class="t" style="left:-881.54px;width:1000px;text-align:right;top:216.56px;font-size:14.3px;line-height:15.97px;font-family:'Liberation Sans',sans-serif;color:#212121;letter-spacing:-1.144px;">VEHICLETYPE</div>
<div class="t" style="left:-825.00px;width:1000px;text-align:right;top:216.56px;font-size:14.3px;line-height:15.97px;font-family:'Liberation Sans',sans-serif;color:#212121;letter-spacing:0.000px;">25899</div>
<div class="t" style="left:-760.60px;width:1000px;text-align:right;top:216.56px;font-size:14.3px;line-height:15.97px;font-family:'Liberation Sans',sans-serif;color:#212121;letter-spacing:0.000px;">8</div>
<div class="t" style="left:-711.41px;width:1000px;text-align:right;top:216.56px;font-size:14.3px;line-height:15.97px;font-family:'Liberation Sans',sans-serif;color:#212121;letter-spacing:0.000px;">1001</div>
<div class="t" style="left:-595.61px;width:1000px;text-align:right;top:216.56px;font-size:14.3px;line-height:15.97px;font-family:'Liberation Sans',sans-serif;color:#212121;letter-spacing:0.000px;">NaN</div>
<div class="t" style="left:-487.91px;width:1000px;text-align:right;top:216.56px;font-size:14.3px;line-height:15.97px;font-family:'Liberation Sans',sans-serif;color:#212121;letter-spacing:0.000px;">NaN</div>
<div class="t" style="left:-428.31px;width:1000px;text-align:right;top:216.56px;font-size:14.3px;line-height:15.97px;font-family:'Liberation Sans',sans-serif;color:#212121;letter-spacing:0.000px;">NaN</div>
<div class="t" style="left:-336.31px;width:1000px;text-align:right;top:216.56px;font-size:14.3px;line-height:15.97px;font-family:'Liberation Sans',sans-serif;color:#212121;letter-spacing:0.000px;">NaN</div>
<div class="t" style="left:-261.51px;width:1000px;text-align:right;top:216.56px;font-size:14.3px;line-height:15.97px;font-family:'Liberation Sans',sans-serif;color:#212121;letter-spacing:0.000px;">NaN</div>
<div class="t" style="left:-131.41px;width:1000px;text-align:right;top:216.56px;font-size:14.3px;line-height:15.97px;font-family:'Liberation Sans',sans-serif;color:#212121;letter-spacing:0.000px;">NaN</div>
<div class="t" style="left:-5.81px;width:1000px;text-align:right;top:216.56px;font-size:14.3px;line-height:15.97px;font-family:'Liberation Sans',sans-serif;color:#212121;letter-spacing:0.000px;">NaN</div>
<div class="t" style="left:123.99px;width:1000px;text-align:right;top:216.56px;font-size:14.3px;line-height:15.97px;font-family:'Liberation Sans',sans-serif;color:#212121;letter-spacing:0.000px;">NaN</div>
<div class="t" style="left:250.49px;width:1000px;text-align:right;top:216.56px;font-size:14.3px;line-height:15.97px;font-family:'Liberation Sans',sans-serif;color:#212121;letter-spacing:0.000px;">NaN</div>
<div class="t" style="left:381.99px;width:1000px;text-align:right;top:216.56px;font-size:14.3px;line-height:15.97px;font-family:'Liberation Sans',sans-serif;color:#212121;letter-spacing:0.000px;">NaN</div>
<div class="t" style="left:8.70px;top:250.56px;font-size:14.3px;line-height:15.97px;font-family:'Liberation Sans',sans-serif;color:#000;letter-spacing:0.000px;font-weight:bold;">6</div>
<div class="t" style="left:-881.39px;width:1000px;text-align:right;top:250.56px;font-size:14.3px;line-height:15.97px;font-family:'Liberation Sans',sans-serif;color:#212121;letter-spacing:-0.988px;">GEARBOX</div>
<div class="t" style="left:-825.00px;width:1000px;text-align:right;top:250.56px;font-size:14.3px;line-height:15.97px;font-family:'Liberation Sans',sans-serif;color:#212121;letter-spacing:0.000px;">26396</div>
<div class="t" style="left:-760.60px;width:1000px;text-align:right;top:250.56px;font-size:14.3px;line-height:15.97px;font-family:'Liberation Sans',sans-serif;color:#212121;letter-spacing:0.000px;">2</div>
<div class="t" style="left:-711.39px;width:1000px;text-align:right;top:250.56px;font-size:14.3px;line-height:15.97px;font-family:'Liberation Sans',sans-serif;color:#212121;letter-spacing:0.000px;">504</div>
<div class="t" style="left:-595.61px;width:1000px;text-align:right;top:250.56px;font-size:14.3px;line-height:15.97px;font-family:'Liberation Sans',sans-serif;color:#212121;letter-spacing:0.000px;">NaN</div>
<div class="t" style="left:-487.91px;width:1000px;text-align:right;top:250.56px;font-size:14.3px;line-height:15.97px;font-family:'Liberation Sans',sans-serif;color:#212121;letter-spacing:0.000px;">NaN</div>
<div class="t" style="left:-428.31px;width:1000px;text-align:right;top:250.56px;font-size:14.3px;line-height:15.97px;font-family:'Liberation Sans',sans-serif;color:#212121;letter-spacing:0.000px;">NaN</div>
<div class="t" style="left:-336.31px;width:1000px;text-align:right;top:250.56px;font-size:14.3px;line-height:15.97px;font-family:'Liberation Sans',sans-serif;color:#212121;letter-spacing:0.000px;">NaN</div>
<div class="t" style="left:-261.51px;width:1000px;text-align:right;top:250.56px;font-size:14.3px;line-height:15.97px;font-family:'Liberation Sans',sans-serif;color:#212121;letter-spacing:0.000px;">NaN</div>
<div class="t" style="left:-131.41px;width:1000px;text-align:right;top:250.56px;font-size:14.3px;line-height:15.97px;font-family:'Liberation Sans',sans-serif;color:#212121;letter-spacing:0.000px;">NaN</div>
<div class="t" style="left:-5.81px;width:1000px;text-align:right;top:250.56px;font-size:14.3px;line-height:15.97px;font-family:'Liberation Sans',sans-serif;color:#212121;letter-spacing:0.000px;">NaN</div>
<div class="t" style="left:123.99px;width:1000px;text-align:right;top:250.56px;font-size:14.3px;line-height:15.97px;font-family:'Liberation Sans',sans-serif;color:#212121;letter-spacing:0.000px;">NaN</div>
<div class="t" style="left:250.49px;width:1000px;text-align:right;top:250.56px;font-size:14.3px;line-height:15.97px;font-family:'Liberation Sans',sans-serif;color:#212121;letter-spacing:0.000px;">NaN</div>
<div class="t" style="left:381.99px;width:1000px;text-align:right;top:250.56px;font-size:14.3px;line-height:15.97px;font-family:'Liberation Sans',sans-serif;color:#212121;letter-spacing:0.000px;">NaN</div>
<div class="abs" style="left:0px;top:274px;width:1287px;height:34px;background:#f5f5f5;"></div>
<div class="t" style="left:8.70px;top:284.56px;font-size:14.3px;line-height:15.97px;font-family:'Liberation Sans',sans-serif;color:#000;letter-spacing:0.000px;font-weight:bold;">7</div>
<div class="t" style="left:-880.71px;width:1000px;text-align:right;top:284.56px;font-size:14.3px;line-height:15.97px;font-family:'Liberation Sans',sans-serif;color:#212121;letter-spacing:-0.313px;">MODEL</div>
<div class="t" style="left:-825.00px;width:1000px;text-align:right;top:284.56px;font-size:14.3px;line-height:15.97px;font-family:'Liberation Sans',sans-serif;color:#212121;letter-spacing:0.000px;">26381</div>
<div class="t" style="left:-760.60px;width:1000px;text-align:right;top:284.56px;font-size:14.3px;line-height:15.97px;font-family:'Liberation Sans',sans-serif;color:#212121;letter-spacing:0.000px;">18</div>
<div class="t" style="left:-711.39px;width:1000px;text-align:right;top:284.56px;font-size:14.3px;line-height:15.97px;font-family:'Liberation Sans',sans-serif;color:#212121;letter-spacing:0.000px;">519</div>
<div class="t" style="left:-595.61px;width:1000px;text-align:right;top:284.56px;font-size:14.3px;line-height:15.97px;font-family:'Liberation Sans',sans-serif;color:#212121;letter-spacing:0.000px;">NaN</div>
<div class="t" style="left:-487.91px;width:1000px;text-align:right;top:284.56px;font-size:14.3px;line-height:15.97px;font-family:'Liberation Sans',sans-serif;color:#212121;letter-spacing:0.000px;">NaN</div>
<div class="t" style="left:-428.31px;width:1000px;text-align:right;top:284.56px;font-size:14.3px;line-height:15.97px;font-family:'Liberation Sans',sans-serif;color:#212121;letter-spacing:0.000px;">NaN</div>
<div class="t" style="left:-336.31px;width:1000px;text-align:right;top:284.56px;font-size:14.3px;line-height:15.97px;font-family:'Liberation Sans',sans-serif;color:#212121;letter-spacing:0.000px;">NaN</div>
<div class="t" style="left:-261.51px;width:1000px;text-align:right;top:284.56px;font-size:14.3px;line-height:15.97px;font-family:'Liberation Sans',sans-serif;color:#212121;letter-spacing:0.000px;">NaN</div>
<div class="t" style="left:-131.41px;width:1000px;text-align:right;top:284.56px;font-size:14.3px;line-height:15.97px;font-family:'Liberation Sans',sans-serif;color:#212121;letter-spacing:0.000px;">NaN</div>
<div class="t" style="left:-5.81px;width:1000px;text-align:right;top:284.56px;font-size:14.3px;line-height:15.97px;font-family:'Liberation Sans',sans-serif;color:#212121;letter-spacing:0.000px;">NaN</div>
<div class="t" style="left:123.99px;width:1000px;text-align:right;top:284.56px;font-size:14.3px;line-height:15.97px;font-family:'Liberation Sans',sans-serif;color:#212121;letter-spacing:0.000px;">NaN</div>
<div class="t" style="left:250.49px;width:1000px;text-align:right;top:284.56px;font-size:14.3px;line-height:15.97px;font-family:'Liberation Sans',sans-serif;color:#212121;letter-spacing:0.000px;">NaN</div>
<div class="t" style="left:381.99px;width:1000px;text-align:right;top:284.56px;font-size:14.3px;line-height:15.97px;font-family:'Liberation Sans',sans-serif;color:#212121;letter-spacing:0.000px;">NaN</div>
<div class="t" style="left:8.70px;top:318.56px;font-size:14.3px;line-height:15.97px;font-family:'Liberation Sans',sans-serif;color:#000;letter-spacing:0.000px;font-weight:bold;">8</div>
<div class="t" style="left:-881.74px;width:1000px;text-align:right;top:318.56px;font-size:14.3px;line-height:15.97px;font-family:'Liberation Sans',sans-serif;color:#212121;letter-spacing:-1.335px;">FUELTYPE</div>
<div class="t" style="left:-825.00px;width:1000px;text-align:right;top:318.56px;font-size:14.3px;line-height:15.97px;font-family:'Liberation Sans',sans-serif;color:#212121;letter-spacing:0.000px;">25930</div>
<div class="t" style="left:-760.60px;width:1000px;text-align:right;top:318.56px;font-size:14.3px;line-height:15.97px;font-family:'Liberation Sans',sans-serif;color:#212121;letter-spacing:0.000px;">7</div>
<div class="t" style="left:-711.39px;width:1000px;text-align:right;top:318.56px;font-size:14.3px;line-height:15.97px;font-family:'Liberation Sans',sans-serif;color:#212121;letter-spacing:0.000px;">970</div>
<div class="t" style="left:-595.61px;width:1000px;text-align:right;top:318.56px;font-size:14.3px;line-height:15.97px;font-family:'Liberation Sans',sans-serif;color:#212121;letter-spacing:0.000px;">NaN</div>
<div class="t" style="left:-487.91px;width:1000px;text-align:right;top:318.56px;font-size:14.3px;line-height:15.97px;font-family:'Liberation Sans',sans-serif;color:#212121;letter-spacing:0.000px;">NaN</div>
<div class="t" style="left:-428.31px;width:1000px;text-align:right;top:318.56px;font-size:14.3px;line-height:15.97px;font-family:'Liberation Sans',sans-serif;color:#212121;letter-spacing:0.000px;">NaN</div>
<div class="t" style="left:-336.31px;width:1000px;text-align:right;top:318.56px;font-size:14.3px;line-height:15.97px;font-family:'Liberation Sans',sans-serif;color:#212121;letter-spacing:0.000px;">NaN</div>
<div class="t" style="left:-261.51px;width:1000px;text-align:right;top:318.56px;font-size:14.3px;line-height:15.97px;font-family:'Liberation Sans',sans-serif;color:#212121;letter-spacing:0.000px;">NaN</div>
<div class="t" style="left:-131.41px;width:1000px;text-align:right;top:318.56px;font-size:14.3px;line-height:15.97px;font-family:'Liberation Sans',sans-serif;color:#212121;letter-spacing:0.000px;">NaN</div>
<div class="t" style="left:-5.81px;width:1000px;text-align:right;top:318.56px;font-size:14.3px;line-height:15.97px;font-family:'Liberation Sans',sans-serif;color:#212121;letter-spacing:0.000px;">NaN</div>
<div class="t" style="left:123.99px;width:1000px;text-align:right;top:318.56px;font-size:14.3px;line-height:15.97px;font-family:'Liberation Sans',sans-serif;color:#212121;letter-spacing:0.000px;">NaN</div>
<div class="t" style="left:250.49px;width:1000px;text-align:right;top:318.56px;font-size:14.3px;line-height:15.97px;font-family:'Liberation Sans',sans-serif;color:#212121;letter-spacing:0.000px;">NaN</div>
<div class="t" style="left:381.99px;width:1000px;text-align:right;top:318.56px;font-size:14.3px;line-height:15.97px;font-family:'Liberation Sans',sans-serif;color:#212121;letter-spacing:0.000px;">NaN</div>
</div>
<div class="t" style="left:1056.40px;top:218.50px;font-size:17.9px;line-height:19.99px;font-family:'Liberation Sans',sans-serif;color:#000;letter-spacing:0.000px;font-style:italic;transform:scaleX(1.1087);transform-origin:0.00px 0;-webkit-text-stroke:0.35px #000;text-shadow:1px 0 0 #fff,-1px 0 0 #fff,0 1px 0 #fff,0 -1px 0 #fff,1px 1px 0 #fff,-1px -1px 0 #fff,1px -1px 0 #fff,-1px 1px 0 #fff;">Überschriften und Beschreibungen</div>
<div class="t" style="left:873.90px;top:312.70px;font-size:17.9px;line-height:19.99px;font-family:'Liberation Sans',sans-serif;color:#000;letter-spacing:0.000px;font-style:italic;transform:scaleX(1.1375);transform-origin:0.00px 0;-webkit-text-stroke:0.35px #000;text-shadow:1px 0 0 #fff,-1px 0 0 #fff,0 1px 0 #fff,0 -1px 0 #fff,1px 1px 0 #fff,-1px -1px 0 #fff,1px -1px 0 #fff,-1px 1px 0 #fff;">direkt ausführbarer Python-Code</div>
<div class="t" style="left:1192.20px;top:347.50px;font-size:17.9px;line-height:19.99px;font-family:'Liberation Sans',sans-serif;color:#000;letter-spacing:0.000px;font-style:italic;transform:scaleX(1.1128);transform-origin:0.00px 0;-webkit-text-stroke:0.35px #000;text-shadow:1px 0 0 #fff,-1px 0 0 #fff,0 1px 0 #fff,0 -1px 0 #fff,1px 1px 0 #fff,-1px -1px 0 #fff,1px -1px 0 #fff,-1px 1px 0 #fff;">Ergebnis ausgeführter Python-Code</div>
<div class="abs" style="left:585px;top:722px;width:1287px;height:21px;background:#f1f1f1;"></div>
<div class="abs" style="left:606px;top:724px;width:1058px;height:17px;background:#c1c1c1;"></div>
<svg style="left:592px;top:727px" width="7" height="11"><polygon points="6,.5 6,10 .5,5.2" fill="#a3a3a3"/></svg>
<svg style="left:1858px;top:727px" width="7" height="11"><polygon points="1,.5 1,10 6.5,5.2" fill="#505050"/></svg>
<div class="t" style="left:592.30px;top:761.73px;font-size:17.2px;line-height:19.21px;font-family:'Liberation Sans',sans-serif;color:#212121;letter-spacing:0.030px;">Display the SELECT statement that was automatically created to obtain the above statistics. The syntax might be useful for transparency, verification or</div>
<div class="t" style="left:592.30px;top:789.73px;font-size:17.2px;line-height:19.21px;font-family:'Liberation Sans',sans-serif;color:#212121;letter-spacing:0.178px;">modification.</div>
<div class="abs" style="left:1890px;top:161px;width:21px;height:655px;background:#f1f1f1;"></div>
<svg style="left:1895px;top:169px" width="11" height="7"><polygon points="0,6 10,6 5,.5" fill="#505050"/></svg>
<div class="abs" style="left:1892px;top:317px;width:17px;height:34px;background:#c1c1c1;"></div>
<svg style="left:1895.5px;top:801.8px" width="11" height="7"><polygon points="0,.5 10,.5 5,6" fill="#505050"/></svg>
<div class="abs" style="left:0px;top:823px;width:1911px;height:29px;background:#eeeeee;"></div>
<div class="t" style="left:22.40px;top:830.97px;font-size:15.5px;line-height:17.31px;font-family:'Liberation Sans',sans-serif;color:#212121;letter-spacing:0.000px;">0</div>
<div class="abs" style="left:46px;top:831px;width:19px;height:18px;background:#424242;"></div>
<div class="t" style="left:48.70px;top:833.24px;font-size:13px;line-height:14.52px;font-family:'Liberation Sans',sans-serif;color:#fff;letter-spacing:0.000px;-webkit-text-stroke:0.3px #fff;">$</div>
<div class="abs" style="left:55.1px;top:844.5px;width:5.8px;height:1.4px;background:#d6d6d6;"></div>
<div class="t" style="left:76.90px;top:830.97px;font-size:15.5px;line-height:17.31px;font-family:'Liberation Sans',sans-serif;color:#212121;letter-spacing:0.000px;">7</div>
<svg style="left:98px;top:829px" width="19" height="20" viewBox="0 0 19 20"><rect x="4" y="4.7" width="11" height="11" rx="1.5" fill="none" stroke="#454545" stroke-width="2"/><rect x="7.8" y="8.5" width="3.4" height="3.4" fill="none" stroke="#454545" stroke-width="1.7"/><path d="M7.6 1.6v2.2M11.2 1.6v2.2M7.6 16.6v2.2M11.2 16.6v2.2M1 9.1h2.2M1 11.7h2.2M15.9 9.1h2.2M15.9 11.7h2.2" stroke="#454545" stroke-width="1.8"/></svg>
<div class="t" style="left:140.80px;top:830.97px;font-size:15.5px;line-height:17.31px;font-family:'Liberation Sans',sans-serif;color:#212121;letter-spacing:0.185px;">Python 3 | Idle</div>
<div class="t" style="left:1362.30px;top:830.97px;font-size:15.5px;line-height:17.31px;font-family:'Liberation Sans',sans-serif;color:#212121;letter-spacing:0.443px;">Mode: Command</div>
<svg style="left:1510px;top:828px" width="19" height="18" viewBox="0 0 19 18"><path d="M9.5 1.9L1.9 4.3V7.5C1.9 11.5 5.1 15.1 9.5 16.3 13.9 15.1 17.1 11.5 17.1 7.5V4.3Z" fill="none" stroke="#454545" stroke-width="1.8" stroke-linejoin="round"/><path d="M6.6 5.5l5.8 5.8M12.4 5.5l-5.8 5.8" stroke="#454545" stroke-width="1.5"/></svg>
<div class="t" style="left:1552.60px;top:830.97px;font-size:15.5px;line-height:17.31px;font-family:'Liberation Sans',sans-serif;color:#212121;letter-spacing:-0.156px;">Ln 1, Col 1</div>
<div class="t" style="left:1647.10px;top:830.97px;font-size:15.5px;line-height:17.31px;font-family:'Liberation Sans',sans-serif;color:#212121;letter-spacing:0.288px;">30 EDA and data preparation.ipynb</div>
</body></html>
